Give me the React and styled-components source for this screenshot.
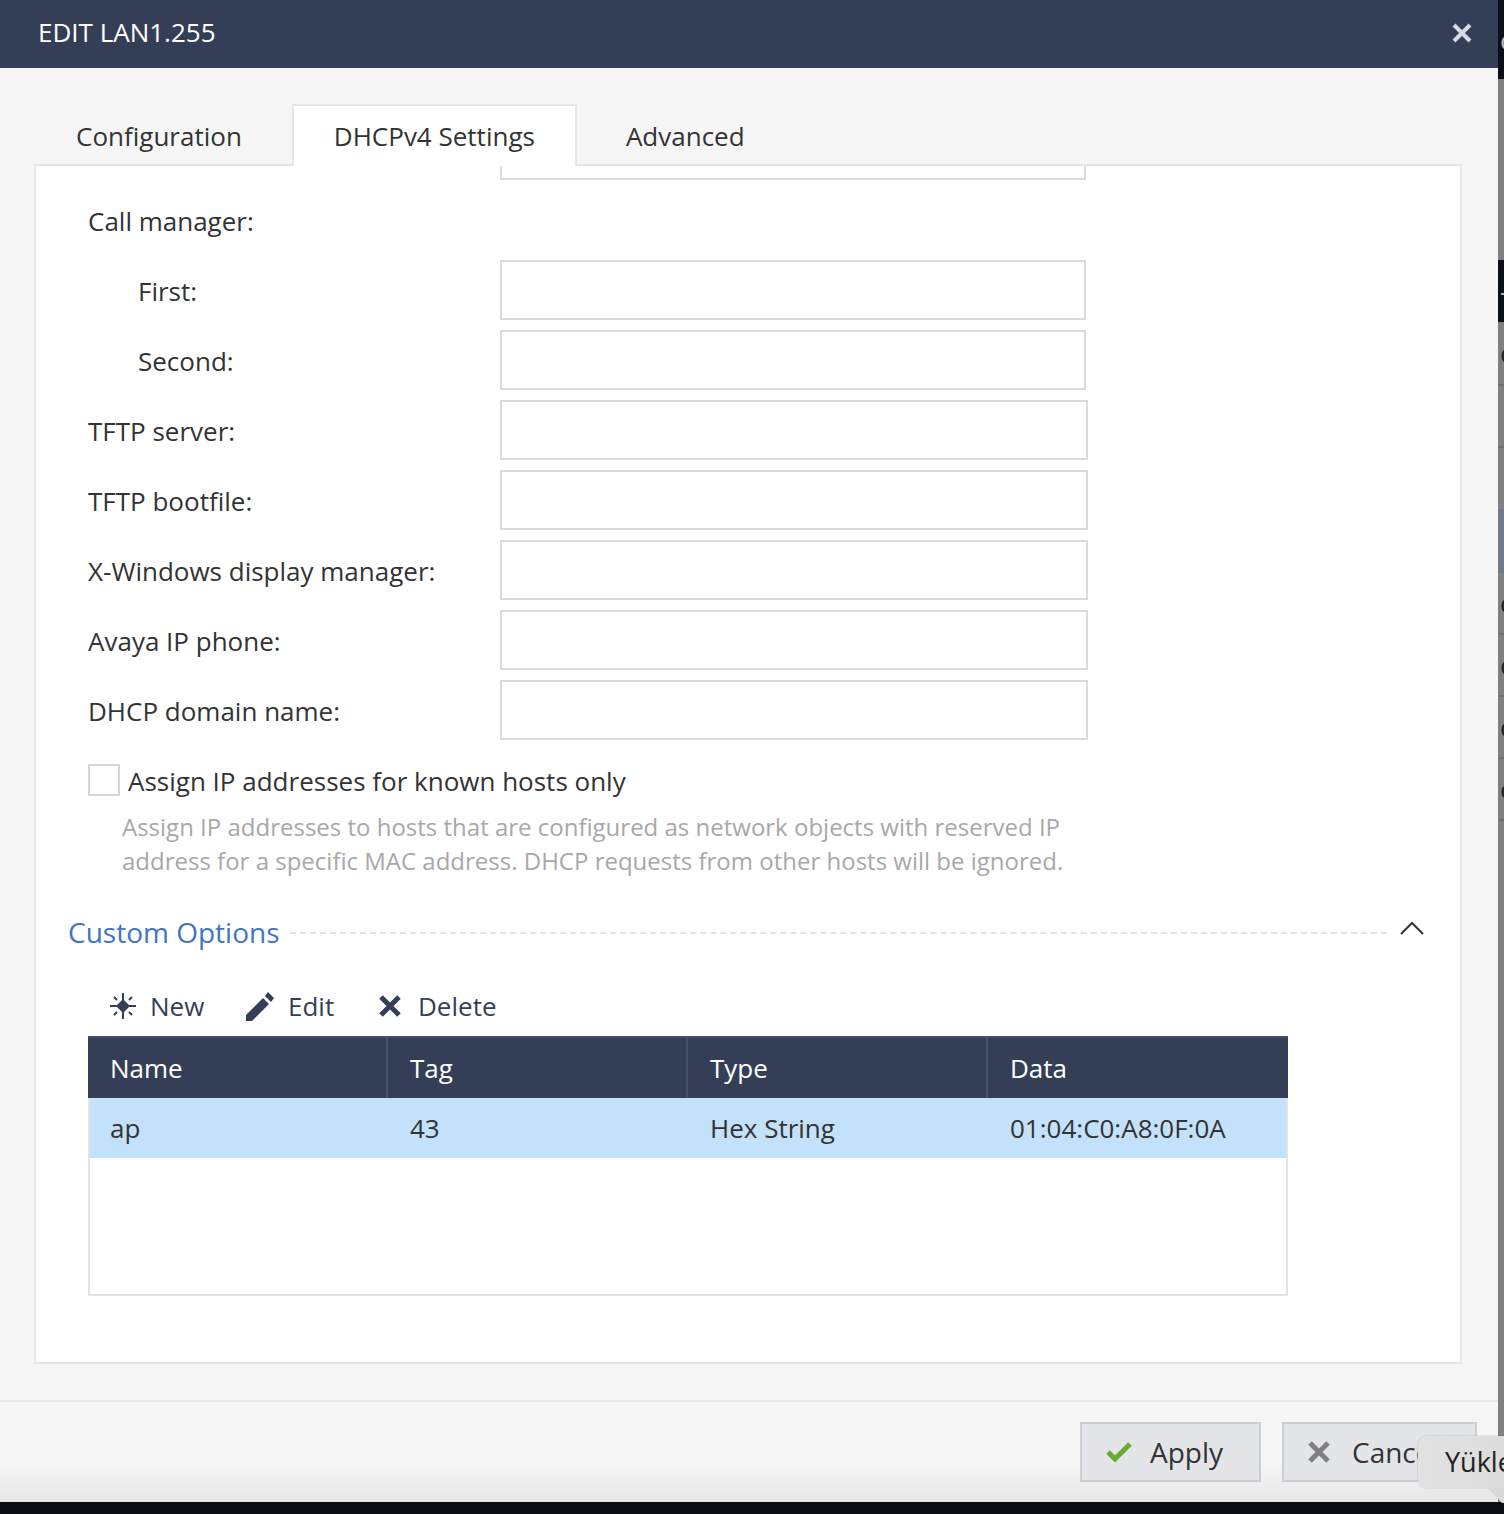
import React from 'react';
import styled, { createGlobalStyle } from 'styled-components';

const GlobalStyle = createGlobalStyle`
  html, body {
    margin: 0;
    padding: 0;
    background: #0b0e14;
  }

  body {
    font-family: "Open Sans", "Liberation Sans", sans-serif;
    font-size: 26px;
    color: #333;
  }

  * {
    box-sizing: border-box;
  }
`;

const Page = styled.div`
  position: relative;
  width: 1504px;
  height: 1514px;
  overflow: hidden;
  display: grid;
  grid-template-columns: 1498px 6px;
  grid-template-rows: 1502px 12px;
`;

const Dialog = styled.div`
  display: flex;
  flex-direction: column;
  background: #f6f6f6;
`;

const Header = styled.header`
  flex: none;
  height: 68px;
  padding: 0 25px 2px 38px;
  display: flex;
  align-items: center;
  justify-content: space-between;
  background: #343f57;
  color: #fff;
`;

const Title = styled.h1`
  margin: 0 0 2px;
  font-size: 26px;
  font-weight: 400;
`;

const Body = styled.div`
  flex: 1;
  padding: 36px 36px 36px 34px;
`;

const Tabs = styled.div`
  display: flex;
  gap: 8px;
  height: 62px;
  margin-bottom: -2px;
  position: relative;
`;

const Tab = styled.div`
  height: 62px;
  padding: 0 40px;
  display: flex;
  align-items: center;
  border: 2px solid ${({ $active }) => ($active ? '#e3e7ec' : 'transparent')};
  border-bottom: 0;
  background: ${({ $active }) => ($active ? '#fff' : 'transparent')};
  color: #333;

  &:last-child {
    margin-left: -1px;
  }
`;

const Panel = styled.div`
  width: 1428px;
  height: 1200px;
  border: 2px solid #e3e7ec;
  background: #fff;
  padding-left: 32px;
`;

const Form = styled.div`
  padding-left: 20px;
`;

const ClippedInput = styled.div`
  width: 586px;
  height: 14px;
  margin-left: 412px;
  border: 2px solid #d8dade;
  border-top: 0;
`;

const FieldRow = styled.div`
  display: flex;
  align-items: center;
  height: 60px;
  margin-top: 10px;
`;

const FieldLabel = styled.label`
  flex: none;
  width: 412px;
  padding-left: ${({ $indent }) => ($indent ? '50px' : '0')};
  padding-top: 2px;
`;

const TextInput = styled.input`
  width: ${({ $narrow }) => ($narrow ? '586px' : '588px')};
  height: 60px;
  padding: 0 12px;
  border: 2px solid #d8dade;
  border-radius: 0;
  outline: none;
  background: #fff;
`;

const CheckRow = styled.div`
  display: flex;
  align-items: center;
  gap: 8px;
  margin-top: 24px;
  height: 32px;
`;

const CheckBox = styled.span`
  flex: none;
  width: 32px;
  height: 32px;
  border: 2px solid #d6d7dc;
  background: #fff;
`;

const CheckLabel = styled.span`
  padding-top: 2px;
`;

const Help = styled.p`
  margin: 14px 0 0 34px;
  font-size: 24px;
  line-height: 34px;
  color: #a8a8a8;
`;

const SectionHead = styled.div`
  display: flex;
  align-items: center;
  width: 1356px;
  height: 40px;
  margin-top: 34px;
`;

const SectionTitle = styled.span`
  color: #3f75c4;
  font-size: 28px;
`;

const DashedRule = styled.span`
  flex: 1;
  margin: 2px 13px 0 10px;
  border-top: 2px dashed #e0e3e8;
`;

const Chevron = styled.svg`
  flex: none;
  position: relative;
  top: -4px;
`;

const Toolbar = styled.div`
  display: flex;
  align-items: center;
  height: 40px;
  margin: 34px 0 0 20px;
  padding-left: 20px;
  color: #343f57;
`;

const ToolButton = styled.div`
  display: flex;
  align-items: center;
  width: ${({ $width }) => $width}px;
  gap: ${({ $gap }) => $gap}px;
  padding-left: ${({ $inset }) => $inset}px;
`;

const Table = styled.div`
  width: 1200px;
  margin: 10px 0 0 20px;
`;

const HeadRow = styled.div`
  display: grid;
  grid-template-columns: repeat(4, 300px);
  height: 62px;
  background: #343f57;
  border-top: 2px solid #44516d;
`;

const HeadCell = styled.div`
  display: flex;
  align-items: center;
  padding-left: 22px;
  color: #fff;
  border-right: 2px solid ${({ $last }) => ($last ? 'transparent' : '#44516d')};
`;

const TableBody = styled.div`
  height: 198px;
  border: 2px solid #e0e3e8;
  border-top: 0;
`;

const DataRow = styled.div`
  display: grid;
  grid-template-columns: 298px 300px 300px 298px;
  height: 60px;
  background: #c3e1fb;
`;

const DataCell = styled.div`
  display: flex;
  align-items: center;
  padding-left: 20px;
  color: #333;

  &:not(:first-child) {
    padding-left: 22px;
  }
`;

const Footer = styled.footer`
  flex: none;
  height: 102px;
  padding: 20px 21px 0 0;
  display: flex;
  justify-content: flex-end;
  gap: 21px;
  border-top: 2px solid #e3e7ec;
  background: linear-gradient(#f6f6f6 60%, #e6e6e6);
`;

const Button = styled.button`
  width: ${({ $width }) => $width}px;
  height: 60px;
  padding: 0 0 0 24px;
  display: flex;
  align-items: center;
  gap: ${({ $gap }) => $gap}px;
  border: 2px solid #cdced2;
  background: #e4e5e8;
  color: #333;
  font: inherit;
  font-size: 28px;
  white-space: nowrap;
`;

const Tooltip = styled.div`
  position: absolute;
  left: 1418px;
  top: 1436px;
  width: 110px;
  height: 52px;
  padding: 7px 0 0 27px;
  border-radius: 9px;
  background: linear-gradient(90deg, #e2e2e2, #dadada);
  box-shadow: 0 0 2px rgba(0, 0, 0, 0.25);
  color: #222;
  font-size: 27px;
  white-space: nowrap;
`;

const TooltipTail = styled.svg`
  position: absolute;
  left: 1487px;
  top: 1487px;
`;

const Backdrop = styled.div`
  display: flex;
  flex-direction: column;
  overflow: hidden;
  background: #808080;
`;

const BackdropBand = styled.div`
  flex: none;
  height: ${({ $height }) => $height}px;
  padding-left: 2px;
  display: flex;
  align-items: center;
  background: ${({ $color }) => $color || '#808080'};
  border-bottom: ${({ $line }) => ($line ? '2px solid #6f6f6f' : '0')};
  color: ${({ $dark }) => ($dark ? '#bbb' : '#1c1c1c')};
  font-size: 26px;
  line-height: 1;
  white-space: nowrap;
`;

const BottomEdge = styled.div`
  grid-column: 1 / -1;
  background: #0b0e14;
`;

const CloseIcon = () => (
  <svg width="22" height="22" viewBox="0 0 22 22">
    <path d="M3 3 19 19M19 3 3 19" stroke="#d5dae3" strokeWidth="4" fill="none" />
  </svg>
);

const SparkIcon = () => (
  <svg width="26" height="26" viewBox="0 0 26 26">
    <path d="M12 0H14V7L19 12H26V14H19L14 19V26H12V19L7 14H0V12H7L12 7Z" fill="#343f57" />
    <path d="M4 4 7 7M22 4 19 7M4 22 7 19M22 22 19 19" stroke="#343f57" strokeWidth="2" fill="none" />
  </svg>
);

const PencilIcon = () => (
  <svg width="30" height="30" viewBox="0 0 30 30">
    <path d="M1 30V24L18 7 24 13 7 30Z M20 5 23 1 29 7 26 11Z" fill="#343f57" />
  </svg>
);

const CrossIcon = ({ color = '#343f57' }) => (
  <svg width="22" height="22" viewBox="0 0 22 22">
    <path d="M2 2 20 20M20 2 2 20" stroke={color} strokeWidth="5" fill="none" />
  </svg>
);

const CheckIcon = () => (
  <svg width="26" height="22" viewBox="0 0 26 22">
    <path d="M2 11 9 18 24 3" stroke="#6aaa2f" strokeWidth="5" fill="none" />
  </svg>
);

const fields = [
  { label: 'First:', indent: true, narrow: true },
  { label: 'Second:', indent: true, narrow: true },
  { label: 'TFTP server:' },
  { label: 'TFTP bootfile:' },
  { label: 'X-Windows display manager:' },
  { label: 'Avaya IP phone:' },
  { label: 'DHCP domain name:' },
];

const columns = ['Name', 'Tag', 'Type', 'Data'];
const row = ['ap', '43', 'Hex String', '01:04:C0:A8:0F:0A'];

const bands = [
  { height: 79, color: '#0c0f17', dark: true, text: 'o' },
  { height: 181 },
  { height: 62, color: '#0c0f17', dark: true, text: '-' },
  { height: 64, line: true, text: 'o' },
  { height: 62, line: true },
  { height: 61 },
  { height: 64, color: '#6d7a8a' },
  { height: 62, line: true, text: 'o' },
  { height: 62, line: true, text: 'o' },
  { height: 62, line: true, text: 'o' },
  { height: 62, line: true, text: 'o' },
];

export default function App() {
  return (
    <>
      <GlobalStyle />
      <Page>
        <Dialog>
          <Header>
            <Title>EDIT LAN1.255</Title>
            <CloseIcon />
          </Header>
          <Body>
            <Tabs>
              <Tab>Configuration</Tab>
              <Tab $active>DHCPv4 Settings</Tab>
              <Tab>Advanced</Tab>
            </Tabs>
            <Panel>
              <Form>
                <ClippedInput />
                <FieldRow>
                  <FieldLabel>Call manager:</FieldLabel>
                </FieldRow>
                {fields.map(field => (
                  <FieldRow key={field.label}>
                    <FieldLabel $indent={field.indent}>{field.label}</FieldLabel>
                    <TextInput $narrow={field.narrow} />
                  </FieldRow>
                ))}
                <CheckRow>
                  <CheckBox />
                  <CheckLabel>Assign IP addresses for known hosts only</CheckLabel>
                </CheckRow>
                <Help>
                  Assign IP addresses to hosts that are configured as network objects with reserved IP
                  <br />
                  address for a specific MAC address. DHCP requests from other hosts will be ignored.
                </Help>
              </Form>
              <SectionHead>
                <SectionTitle>Custom Options</SectionTitle>
                <DashedRule />
                <Chevron width="24" height="14" viewBox="0 0 24 14">
                  <path d="M1 13 12 2 23 13" stroke="#333" strokeWidth="2" fill="none" />
                </Chevron>
              </SectionHead>
              <Toolbar>
                <ToolButton $width={137} $gap={14} $inset={2}>
                  <SparkIcon />
                  New
                </ToolButton>
                <ToolButton $width={134} $gap={13} $inset={0}>
                  <PencilIcon />
                  Edit
                </ToolButton>
                <ToolButton $width={130} $gap={17} $inset={0}>
                  <CrossIcon />
                  Delete
                </ToolButton>
              </Toolbar>
              <Table>
                <HeadRow>
                  {columns.map((column, index) => (
                    <HeadCell key={column} $last={index === columns.length - 1}>
                      {column}
                    </HeadCell>
                  ))}
                </HeadRow>
                <TableBody>
                  <DataRow>
                    {row.map(cell => (
                      <DataCell key={cell}>{cell}</DataCell>
                    ))}
                  </DataRow>
                </TableBody>
              </Table>
            </Panel>
          </Body>
          <Footer>
            <Button $width={181} $gap={18}>
              <CheckIcon />
              Apply
            </Button>
            <Button $width={195} $gap={22}>
              <CrossIcon color="#808080" />
              Cancel
            </Button>
          </Footer>
        </Dialog>
        <Backdrop>
          {bands.map((band, index) => (
            <BackdropBand
              key={index}
              $height={band.height}
              $color={band.color}
              $dark={band.dark}
              $line={band.line}
            >
              {band.text}
            </BackdropBand>
          ))}
        </Backdrop>
        <BottomEdge />
        <Tooltip>Yükle</Tooltip>
        <TooltipTail width="17" height="16" viewBox="0 0 17 16">
          <path d="M0 0 15 16H17V0Z" fill="#dadada" />
        </TooltipTail>
      </Page>
    </>
  );
}
